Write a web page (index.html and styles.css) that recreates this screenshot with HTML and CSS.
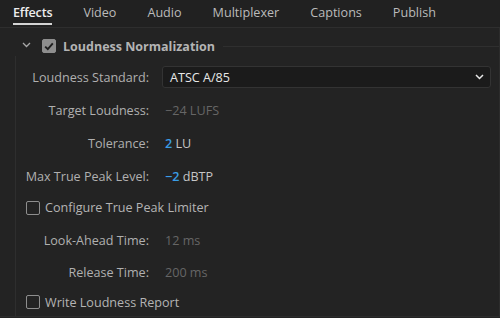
FILE: index.html
```html
<!DOCTYPE html>
<html>
<head>
<meta charset="utf-8">
<link rel="stylesheet" href="styles.css">
</head>
<body>
<div class="app">
  <nav class="tabs">
    <span class="tab active">Effects</span>
    <span class="tab">Video</span>
    <span class="tab">Audio</span>
    <span class="tab">Multiplexer</span>
    <span class="tab">Captions</span>
    <span class="tab">Publish</span>
  </nav>
  <div class="content">
    <div class="section-header">
      <svg class="chev" width="9" height="6" viewBox="0 0 9 6"><path d="M1 1 L4.5 4.5 L8 1" fill="none" stroke="#a8a8a8" stroke-width="1.3"/></svg>
      <span class="cb checked"><svg width="10" height="9" viewBox="0 0 10 9"><path d="M1.2 4.6 L3.8 7.2 L8.8 1.4" fill="none" stroke="#1f1f1f" stroke-width="1.9"/></svg></span>
      <span class="section-title">Loudness Normalization</span>
      <span class="rule"></span>
    </div>
    <div class="section">
      <div class="row r1">
        <span class="label">Loudness Standard:</span>
        <div class="select">
          <span>ATSC A/85</span>
          <svg width="9" height="6" viewBox="0 0 9 6"><path d="M1 1 L4.5 4.5 L8 1" fill="none" stroke="#e8e8e8" stroke-width="1.5"/></svg>
        </div>
      </div>
      <div class="row r2">
        <span class="label">Target Loudness:</span>
        <span class="value dim">−24 LUFS</span>
      </div>
      <div class="row r3">
        <span class="label">Tolerance:</span>
        <span class="value"><span class="num">2</span> LU</span>
      </div>
      <div class="row r4">
        <span class="label">Max True Peak Level:</span>
        <span class="value"><span class="num">−2</span> dBTP</span>
      </div>
      <div class="row check r5">
        <span class="cb"></span>
        <span class="check-label">Configure True Peak Limiter</span>
      </div>
      <div class="row r6">
        <span class="label">Look-Ahead Time:</span>
        <span class="value dim">12 ms</span>
      </div>
      <div class="row r7">
        <span class="label">Release Time:</span>
        <span class="value dim">200 ms</span>
      </div>
      <div class="row check r8">
        <span class="cb"></span>
        <span class="check-label">Write Loudness Report</span>
      </div>
    </div>
  </div>
</div>
</body>
</html>
```

FILE: styles.css
```css
html, body {
  margin: 0;
  padding: 0;
  background: #232323;
}
body {
  width: 500px;
  height: 318px;
  overflow: hidden;
  font-family: "Open Sans", "Liberation Sans", sans-serif;
  font-size: 12.6px;
  color: #aaaaaa;
}
.app {
  width: 500px;
  height: 318px;
  display: flex;
  flex-direction: column;
}
.tabs {
  height: 27px;
  border-bottom: 1px solid #2e2e2e;
  display: flex;
  gap: 31px;
  padding-left: 13px;
  box-sizing: content-box;
  background: #212121;
}
.tab {
  font-size: 12.6px;
  color: #bbbbbb;
  line-height: 25px;
  height: 25px;
  box-sizing: border-box;
}
.tab.active {
  color: #ededed;
  font-weight: 600;
  letter-spacing: -0.2px;
  border-bottom: 2px solid #d4d4d4;
}
.content {
  flex: 1;
  display: flex;
  flex-direction: column;
  border-right: 1px solid #2c2c2c;
  border-bottom: 1px solid #2c2c2c;
  margin-bottom: 1px;
}
.section-header {
  height: 20px;
  margin-top: 8px;
  display: flex;
  align-items: center;
  padding-left: 22px;
}
.chev {
  margin-right: 11px;
  margin-top: -2px;
}
.cb {
  width: 14px;
  height: 14px;
  box-sizing: border-box;
  border: 1.5px solid #8e8e8e;
  border-radius: 2px;
  display: inline-flex;
  align-items: center;
  justify-content: center;
  flex: none;
}
.cb.checked {
  background: #8e8e8e;
  border-color: #8e8e8e;
}
.section-title {
  margin-left: 7px;
  font-weight: 700;
  font-size: 12.5px;
  color: #b4b4b4;
}
.rule {
  flex: 1;
  height: 1px;
  background: #2f2f2f;
  margin-left: 8px;
}
.section {
  flex: 1;
  margin-left: 15px;
  border-left: 1px solid #2e2e2e;
  padding-top: 5px;
  display: flex;
  flex-direction: column;
}
.row {
  display: flex;
  align-items: center;
}
.r1 { height: 32px; }
.r2 { height: 34px; }
.r3 { height: 33px; }
.r4 { height: 32px; }
.r5 { height: 31px; }
.r6 { height: 34px; }
.r7 { height: 31px; }
.r8 { height: 28px; }
.label {
  width: 133px;
  text-align: right;
  color: #b0b0b0;
  flex: none;
}
.value {
  margin-left: 16px;
  color: #c6c6c6;
}
.value.dim {
  color: #666666;
}
.num {
  color: #3a9de6;
  font-weight: 600;
}
.select {
  margin-left: 13px;
  width: 329px;
  height: 22px;
  box-sizing: border-box;
  background: #1b1b1b;
  border: 1px solid #333333;
  border-radius: 3px;
  display: flex;
  align-items: center;
  justify-content: space-between;
  padding: 0 6px 0 7px;
  color: #e8e8e8;
}
.check {
  padding-left: 10px;
}
.check-label {
  margin-left: 5px;
  color: #b4b4b4;
}
```
